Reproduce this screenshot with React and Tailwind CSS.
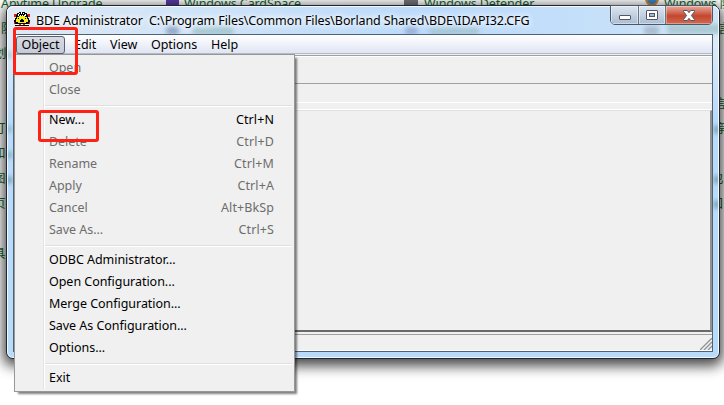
import clsx from 'clsx';

const menuGroups = [
  [
    { label: 'Open', disabled: true },
    { label: 'Close', disabled: true },
  ],
  [
    { label: 'New...', shortcut: 'Ctrl+N' },
    { label: 'Delete', shortcut: 'Ctrl+D', disabled: true },
    { label: 'Rename', shortcut: 'Ctrl+M', disabled: true },
    { label: 'Apply', shortcut: 'Ctrl+A', disabled: true },
    { label: 'Cancel', shortcut: 'Alt+BkSp', disabled: true },
    { label: 'Save As...', shortcut: 'Ctrl+S', disabled: true },
  ],
  [
    { label: 'ODBC Administrator...' },
    { label: 'Open Configuration...' },
    { label: 'Merge Configuration...' },
    { label: 'Save As Configuration...' },
    { label: 'Options...' },
  ],
  [{ label: 'Exit' }],
];

// text of the page that lies behind the window
const behind = [
  { text: 'Anytime Upgrade', x: 1, y: -5 },
  { text: 'Windows CardSpace', x: 184, y: -5 },
  { text: 'Windows Defender', x: 424, y: -5 },
  { text: 'Windows 防', x: 664, y: -5 },
  { text: '防', x: 1, y: 20 },
  { text: '划', x: -6, y: 45 },
  { text: '打', x: -7, y: 120 },
  { text: '和', x: -7, y: 145 },
  { text: '图', x: -7, y: 170 },
  { text: '页', x: -7, y: 195 },
  { text: '具', x: -7, y: 245 },
  { text: '言', x: 718, y: 20 },
  { text: '信', x: 713, y: 95 },
  { text: '等', x: 713, y: 120 },
  { text: '也', x: 711, y: 170 },
  { text: '口', x: 711, y: 195 },
];

// smudges seen through the glass frame
const smudges = [
  { x: 159, y: 20, w: 13, h: 9, color: '#7f96bb' },
  { x: 185, y: 21, w: 42, h: 8, color: '#9abfc6' },
  { x: 398, y: 20, w: 13, h: 9, color: '#8ba3d0' },
  { x: 422, y: 21, w: 50, h: 8, color: '#9bc0cc' },
  { x: 637, y: 20, w: 15, h: 9, color: '#9fb0c6' },
  { x: 660, y: 18, w: 56, h: 10, color: '#a0c2ca' },
  { x: 0, y: 45, w: 5, h: 8, color: '#9fbdc4' },
  { x: 0, y: 119, w: 5, h: 8, color: '#7fafbc' },
  { x: 0, y: 145, w: 5, h: 8, color: '#6f9fac' },
  { x: 0, y: 170, w: 5, h: 8, color: '#5c8e9b' },
  { x: 707, y: 119, w: 5, h: 9, color: '#5c8e9b' },
  { x: 707, y: 169, w: 5, h: 9, color: '#5c8e9b' },
  { x: 707, y: 194, w: 5, h: 9, color: '#5c8e9b' },
];

export default function App() {
  return (
    <div className="relative h-[405px] w-[724px] overflow-hidden bg-white font-['Noto_Sans','Noto_Sans_CJK_SC',sans-serif] text-[12.5px] tracking-[-0.04px] text-black">
      <Backdrop />
      <Window />
      <ObjectMenu />
      <div className="absolute top-[27px] left-[13px] h-12 w-[65px] rounded-[3px] border-3 border-[#ff2113]" />
      <div className="absolute top-[110px] left-[38px] h-8 w-[61px] rounded-[3px] border-3 border-[#ff2113]" />
    </div>
  );
}

function Backdrop() {
  return (
    <>
      {behind.map((item) => (
        <span
          key={item.text + item.x}
          className="absolute text-[12.5px] leading-[18px] tracking-[-0.1px] whitespace-nowrap text-[#12682b]"
          style={{ left: item.x, top: item.y }}
        >
          {item.text}
        </span>
      ))}
      <div className="absolute top-0 left-[166px] h-[5px] w-[13px] bg-[#5b3aa8]" />
      <div className="absolute top-0 left-[404px] h-[5px] w-[14px] bg-[#77747c]" />
      <div className="absolute -top-2 left-[645px] size-[14px] rounded-full border-2 border-[#d98a2b] bg-[#3a86c8]" />
    </>
  );
}

function Window() {
  return (
    <div className="absolute top-[5px] left-[6px] flex h-[354px] w-[714px] flex-col overflow-visible rounded-[7px] border border-[#1f262d] bg-[#b9dbfb] shadow-[0_4px_13px_3px_rgba(0,0,0,0.72)]">
      <div className="absolute inset-0 overflow-hidden rounded-[6px]">
        <div className="absolute inset-x-0 top-0 h-[110px] bg-linear-to-b from-[#e4effa] via-[#d6e8f9] to-[#b9dbfb]" />
        <div className="absolute inset-x-0 top-0 h-7 bg-linear-to-r from-[#dfeaf5] via-[#b9dafb] via-60% to-[#cfe4f8]" />
        {smudges.map((s) => (
          <div
            key={`${s.x}-${s.y}`}
            className="absolute rounded-sm opacity-75 blur-[2px]"
            style={{ left: s.x, top: s.y, width: s.w, height: s.h, background: s.color }}
          />
        ))}
        <div className="absolute inset-0 rounded-[6px] border border-white/80" />
      </div>
      <TitleBar />
      <div className="relative mx-[6px] mb-[6px] flex min-h-0 flex-1 flex-col border border-[#4e6273] bg-[#f0f0f0]">
        <MenuBar />
        <div className="h-[28px] shrink-0 border-t border-b border-t-white border-b-[#a0a0a0]" />
        <div className="h-[19px] shrink-0 border-b border-white" />
        <div className="h-[7px] shrink-0 border-b border-white" />
        <div className="min-h-0 flex-1 border-t border-r-2 border-b-2 border-t-[#e0e0e0] border-r-[#929292] border-b-[#696969]" />
        <StatusBar />
      </div>
    </div>
  );
}

function TitleBar() {
  return (
    <div className="relative flex h-7 shrink-0 pl-[7px]">
      <AppIcon />
      <span className="ml-[6px] pt-[6px] leading-[18px] tracking-[-0.11px] whitespace-pre [text-shadow:0_0_5px_#fff,0_0_8px_#fff,0_0_10px_#fff]">
        {'BDE Administrator  C:\\Program Files\\Common Files\\Borland Shared\\BDE\\IDAPI32.CFG'}
      </span>
      <CaptionButtons />
    </div>
  );
}

function AppIcon() {
  return (
    <svg className="mt-[6px] size-4 shrink-0" viewBox="0 0 16 16" shapeRendering="crispEdges">
      <path d="M0 2h4v3H0zM12 2h4v3h-4zM0 9h2v3H0zM14 9h2v3h-2z" fill="#e01818" />
      <path d="M5 0h6v1h2v2h1v3h1v2h1v2h-1v2h-1v1h1v1H1v-1h1v-1H1v-2H0V8h1V6h1V3h1V1h2z" fill="#000" />
      <path d="M5 1h1v1H5zM7 0h1v2H7zM9 1h1v1H9zM4 2h1v2H4zM6 3h1v1H6zM8 3h1v1H8zM11 2h1v2h-1zM10 3h1v1h-1z" fill="#fff" />
      <path d="M5 4h6v1h2v2h1v3h-2v1H4v-1H2V7h1V5h2z" fill="#f7ed19" />
      <path d="M4 6h1v1H4zM11 6h1v1h-1zM7 7h2v1h1v2H6V8h1z" fill="#000" />
      <path d="M2 12h3v1H2zM7 12h2v1H7zM11 12h3v1h-3z" fill="#fff" />
      <path d="M5 12h2v1H5zM9 12h2v1H9z" fill="#e01818" />
    </svg>
  );
}

function CaptionButtons() {
  return (
    <div className="absolute -top-px right-[6px] flex h-5 w-[103px] overflow-hidden rounded-b-[5px] border border-[#4b5866]">
      <div className="flex w-[28px] items-center justify-center border-r border-[#66778a] bg-linear-to-b from-[#dce6f1] via-[#c3d1e0] via-50% to-[#a9bdd3] shadow-[inset_0_0_0_1px_rgba(255,255,255,0.45)]">
        <div className="mt-[5px] h-[5px] w-3 rounded-[1px] border border-[#535666] bg-white" />
      </div>
      <div className="flex w-[27px] items-center justify-center border-r border-[#66778a] bg-linear-to-b from-[#dce6f1] via-[#c3d1e0] via-50% to-[#a9bdd3] shadow-[inset_0_0_0_1px_rgba(255,255,255,0.45)]">
        <div className="flex h-[10px] w-3 items-center justify-center rounded-[1px] border border-[#535666] bg-white">
          <div className="h-1 w-[6px] border border-[#535666] bg-[#a5b9d0]" />
        </div>
      </div>
      <div className="flex flex-1 items-center justify-center bg-linear-to-b from-[#e3a99d] from-0% via-[#c4452d] via-55% to-[#d06a50] shadow-[inset_0_0_0_1px_rgba(255,255,255,0.35)]">
        <svg className="h-[11px] w-3" viewBox="0 0 12 11">
          <path d="M.5.5h3.8L6 2.7 7.7.5h3.8v1L8.4 5.5l3.1 4v1H7.7L6 8.3l-1.7 2.2H.5v-1l3.1-4-3.1-4z" fill="#fff" stroke="#535666" />
        </svg>
      </div>
    </div>
  );
}

function MenuBar() {
  return (
    <div className="flex h-[21px] shrink-0 flex-col bg-linear-to-b from-white via-[#f4f6fb] via-30% to-[#dbe1f1]">
      <div className="flex h-[19px] items-center border-b border-[#b5bacb] leading-[18px]">
        <span className="mt-px ml-[2px] flex h-[18px] w-[49px] items-center justify-center rounded-[3px] border border-[#5c606b] bg-linear-to-b from-[#d9dbe2] to-[#c6cad9]">
          Object
        </span>
        <span className="mt-[2px] ml-[9px] w-[36px]">Edit</span>
        <span className="mt-[2px] w-[41px]">View</span>
        <span className="mt-[2px] w-[60px]">Options</span>
        <span className="mt-[2px]">Help</span>
      </div>
      <div className="flex-1 border-b border-[#a0a0a0] bg-[#f0f0f0]" />
    </div>
  );
}

function StatusBar() {
  return (
    <div className="flex h-[19px] shrink-0 flex-col border-b border-white pt-[2px]">
      <div className="relative flex-1 border-t border-[#a0a0a0]">
        <svg className="absolute right-0 bottom-0 size-3" viewBox="0 0 12 12">
          <path d="M0 12L12 0M4 12l8-8M8 12l4-4" stroke="#929292" strokeWidth="1.3" />
        </svg>
      </div>
    </div>
  );
}

function ObjectMenu() {
  return (
    <div className="absolute top-[54px] left-[14px] w-[281px] border border-[#979797] bg-[#f0f0f0] p-[2px] shadow-[3px_3px_2px_-1px_rgba(0,0,0,0.5)]">
      <div className="absolute top-[2px] bottom-[2px] left-7 w-[2px] border-l border-[#e2e3e3] bg-white" />
      {menuGroups.map((group, i) => (
        <div key={i}>
          {i > 0 && (
            <div className="ml-7 h-2 pt-1">
              <div className="h-[2px] border-t border-[#e0e0e0] bg-white" />
            </div>
          )}
          {group.map((item) => (
            <div
              key={item.label}
              className={clsx(
                'flex h-[22px] items-center justify-between pr-[18px] pl-8',
                item.disabled && 'text-[#6d6d6d]'
              )}
            >
              <span>{item.label}</span>
              <span className="tracking-[0.1px]">{item.shortcut}</span>
            </div>
          ))}
        </div>
      ))}
    </div>
  );
}
